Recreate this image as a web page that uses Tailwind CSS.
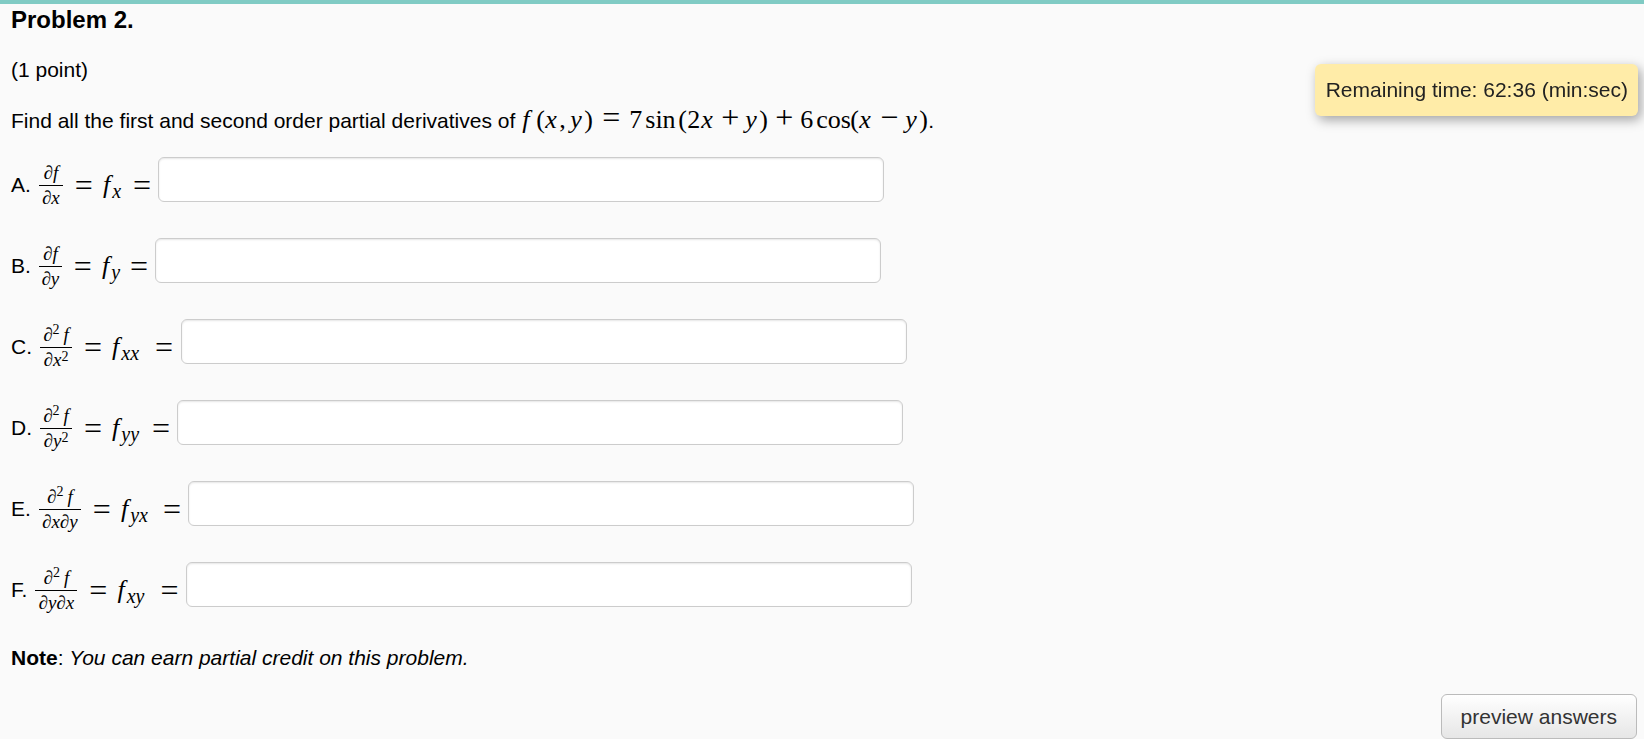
<!DOCTYPE html>
<html lang="en">
<head>
  <meta charset="UTF-8">
  <meta name="viewport" content="width=device-width, initial-scale=1.0">
  <script src="https://cdn.jsdelivr.net/npm/@tailwindcss/browser@4"></script>
  <title>Problem 2</title>
</head>
<body class="bg-[#fafafa] text-black font-['Liberation_Sans',sans-serif] text-[21px] leading-[30px]">
  <div class="fixed right-1.5 top-16 rounded-md bg-[#ffeca8] pl-[11px] pr-2.5 py-[11px] text-[#222] shadow-[3px_4px_12px_rgba(0,0,0,0.35)]">Remaining time: 62:36 (min:sec)</div>

  <main class="border-t-4 border-[#80cbc4] pl-[11px] pr-[7px]">
    <h1 class="text-2xl leading-8 font-bold">Problem 2.</h1>
    <p class="mt-[19px]">(1 point)</p>

    <div class="mt-[17px] flex items-baseline whitespace-nowrap">
      <span>Find all the first and second order partial derivatives of</span>
      <!-- f(x, y) = 7 sin(2x + y) + 6 cos(x - y) -->
      <span class="ml-[7px] flex items-baseline font-['Liberation_Serif',serif] text-[26px] leading-[30px]">
        <i class="w-3.5">f</i><span class="w-[9px]">(</span><i class="w-3.5">x</i><span class="w-[11px]">,</span><i class="w-3.5">y</i><span class="w-[9px]">)</span>
        <span class="w-9 text-center text-[32px]">=</span>
        <span class="w-4">7</span><span class="w-[33px]">sin</span><span class="w-[9px]">(</span><span class="w-3.5">2</span><i class="w-3.5">x</i>
        <span class="w-[30px] text-center text-[32px]">+</span>
        <i class="w-3.5">y</i><span class="w-[9px]">)</span>
        <span class="w-8 text-center text-[32px]">+</span>
        <span class="w-4">6</span><span class="w-[34px]">cos</span><span class="w-[9px]">(</span><i class="w-3.5">x</i>
        <span class="w-8 text-center text-[32px]">−</span>
        <i class="w-3.5">y</i><span class="w-[9px]">)</span>
      </span>
      <span>.</span>
    </div>

    <form id="answers">
      <div class="mt-[21px] flex flex-col gap-[25px]">
        <div class="flex items-start">
          <label for="a" class="flex h-14 items-center">
            <span class="mr-2">A.</span>
            <span class="flex w-6 flex-col text-center font-['Liberation_Serif',serif] text-[19px] leading-6 italic">
              <span class="border-b border-black">∂f</span><span>∂x</span>
            </span>
            <span class="ml-3 font-['Liberation_Serif',serif] text-[32px]">=</span>
            <span class="w-10 pl-2.5 font-['Liberation_Serif',serif] text-[26px] italic whitespace-nowrap">f<sub class="ml-0.5 text-[20px]">x</sub></span>
            <span class="mr-[7px] font-['Liberation_Serif',serif] text-[32px]">=</span>
          </label>
          <input id="a" type="text" class="h-[45px] w-[726px] rounded-md border border-[#ccc] bg-white px-2 shadow-[inset_0_1px_2px_rgba(0,0,0,0.1)]">
        </div>

        <div class="flex items-start">
          <label for="b" class="flex h-14 items-center">
            <span class="mr-2">B.</span>
            <span class="flex w-[23px] flex-col text-center font-['Liberation_Serif',serif] text-[19px] leading-6 italic">
              <span class="border-b border-black">∂f</span><span>∂y</span>
            </span>
            <span class="ml-3 font-['Liberation_Serif',serif] text-[32px]">=</span>
            <span class="w-[38px] pl-2.5 font-['Liberation_Serif',serif] text-[26px] italic whitespace-nowrap">f<sub class="ml-0.5 text-[20px]">y</sub></span>
            <span class="mr-[7px] font-['Liberation_Serif',serif] text-[32px]">=</span>
          </label>
          <input id="b" type="text" class="h-[45px] w-[726px] rounded-md border border-[#ccc] bg-white px-2 shadow-[inset_0_1px_2px_rgba(0,0,0,0.1)]">
        </div>

        <div class="flex items-start">
          <label for="c" class="flex h-14 items-center">
            <span class="mr-2">C.</span>
            <span class="flex w-8 flex-col text-center font-['Liberation_Serif',serif] text-[19px] leading-6 italic">
              <span class="border-b border-black">∂<sup class="mr-1 text-sm not-italic">2</sup>f</span><span>∂x<sup class="-top-[5px] text-sm not-italic">2</sup></span>
            </span>
            <span class="ml-3 font-['Liberation_Serif',serif] text-[32px]">=</span>
            <span class="w-[53px] pl-2.5 font-['Liberation_Serif',serif] text-[26px] italic whitespace-nowrap">f<sub class="ml-0.5 text-[20px]">xx</sub></span>
            <span class="mr-2 font-['Liberation_Serif',serif] text-[32px]">=</span>
          </label>
          <input id="c" type="text" class="h-[45px] w-[726px] rounded-md border border-[#ccc] bg-white px-2 shadow-[inset_0_1px_2px_rgba(0,0,0,0.1)]">
        </div>

        <div class="flex items-start">
          <label for="d" class="flex h-14 items-center">
            <span class="mr-2">D.</span>
            <span class="flex w-8 flex-col text-center font-['Liberation_Serif',serif] text-[19px] leading-6 italic">
              <span class="border-b border-black">∂<sup class="mr-1 text-sm not-italic">2</sup>f</span><span>∂y<sup class="-top-[5px] text-sm not-italic">2</sup></span>
            </span>
            <span class="ml-3 font-['Liberation_Serif',serif] text-[32px]">=</span>
            <span class="w-[50px] pl-2.5 font-['Liberation_Serif',serif] text-[26px] italic whitespace-nowrap">f<sub class="ml-0.5 text-[20px]">yy</sub></span>
            <span class="mr-[7px] font-['Liberation_Serif',serif] text-[32px]">=</span>
          </label>
          <input id="d" type="text" class="h-[45px] w-[726px] rounded-md border border-[#ccc] bg-white px-2 shadow-[inset_0_1px_2px_rgba(0,0,0,0.1)]">
        </div>

        <div class="flex items-start">
          <label for="e" class="flex h-14 items-center">
            <span class="mr-2">E.</span>
            <span class="flex w-[42px] flex-col text-center font-['Liberation_Serif',serif] text-[19px] leading-6 italic">
              <span class="border-b border-black">∂<sup class="mr-1 text-sm not-italic">2</sup>f</span><span>∂x∂y</span>
            </span>
            <span class="ml-3 font-['Liberation_Serif',serif] text-[32px]">=</span>
            <span class="w-[52px] pl-2.5 font-['Liberation_Serif',serif] text-[26px] italic whitespace-nowrap">f<sub class="ml-0.5 text-[20px]">yx</sub></span>
            <span class="mr-[7px] font-['Liberation_Serif',serif] text-[32px]">=</span>
          </label>
          <input id="e" type="text" class="h-[45px] w-[726px] rounded-md border border-[#ccc] bg-white px-2 shadow-[inset_0_1px_2px_rgba(0,0,0,0.1)]">
        </div>

        <div class="flex items-start">
          <label for="f" class="flex h-14 items-center">
            <span class="mr-2">F.</span>
            <span class="flex w-[42px] flex-col text-center font-['Liberation_Serif',serif] text-[19px] leading-6 italic">
              <span class="border-b border-black">∂<sup class="mr-1 text-sm not-italic">2</sup>f</span><span>∂y∂x</span>
            </span>
            <span class="ml-3 font-['Liberation_Serif',serif] text-[32px]">=</span>
            <span class="w-[53px] pl-2.5 font-['Liberation_Serif',serif] text-[26px] italic whitespace-nowrap">f<sub class="ml-0.5 text-[20px]">xy</sub></span>
            <span class="mr-2 font-['Liberation_Serif',serif] text-[32px]">=</span>
          </label>
          <input id="f" type="text" class="h-[45px] w-[726px] rounded-md border border-[#ccc] bg-white px-2 shadow-[inset_0_1px_2px_rgba(0,0,0,0.1)]">
        </div>
      </div>

      <p class="mt-[25px]"><b>Note</b>: <i>You can earn partial credit on this problem.</i></p>

      <div class="mt-[21px] flex justify-end">
        <button type="button" class="cursor-pointer rounded-md border border-[#bbb] bg-linear-to-b from-white to-[#e6e6e6] px-[19px] h-[45px] text-[#333]">preview answers</button>
      </div>
    </form>
  </main>
</body>
</html>
